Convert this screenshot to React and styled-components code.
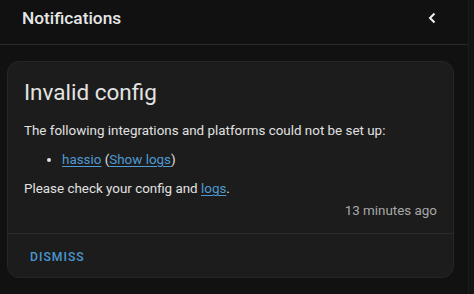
import React from "react";
import styled, { createGlobalStyle } from "styled-components";

const Global = createGlobalStyle`
  html, body { margin: 0; padding: 0; background: #131313; }
  body { font-family: Roboto, "Noto Sans", sans-serif; color: #e1e1e1; }
`;

const Page = styled.div`
  display: flex;
  width: 474px;
  height: 294px;
  overflow: hidden;
`;

const Drawer = styled.div`
  width: 468px;
  height: 294px;
  background: #111111;
  border-right: 1px solid #1b1b1b;
  display: flex;
  flex-direction: column;
`;

const Header = styled.div`
  height: 44px;
  border-bottom: 1px solid #2a2a2a;
  display: flex;
  align-items: center;
  justify-content: space-between;
  padding: 0 28px 0 22px;
  box-sizing: content-box;
`;

const HeaderTitle = styled.div`
  font-size: 17.3px;
  font-weight: 500;
  color: #e6e6e6;
  margin-top: -8px;
`;

const BackButton = styled.button`
  background: none;
  border: 0;
  padding: 0;
  width: 16px;
  height: 16px;
  display: flex;
  align-items: center;
  justify-content: center;
  color: #f0f0f0;
  margin-top: -8px;
`;

const Content = styled.div`
  padding: 16px 14px 0 7px;
`;

const Card = styled.div`
  background: #1c1c1c;
  border: 1px solid #262626;
  border-radius: 12px;
  height: 217px;
  box-sizing: border-box;
  display: flex;
  flex-direction: column;
`;

const CardBody = styled.div`
  padding: 14px 16px 0 16px;
  height: 172px;
  box-sizing: border-box;
  border-bottom: 1px solid #2a2a2a;
`;

const Title = styled.div`
  font-size: 22.5px;
  line-height: 32px;
  color: #e3e3e3;
  margin-bottom: 13px;
`;

const Text = styled.p`
  margin: 0;
  font-size: 13.4px;
  line-height: 20px;
  color: #e1e1e1;
`;

const List = styled.ul`
  margin: 9px 0 9px 0;
  padding-left: 38px;
  font-size: 13.4px;
  line-height: 20px;
`;

const Link = styled.a`
  color: #4f9ad3;
  text-decoration: underline;
  text-underline-offset: 2px;
`;

const Time = styled.div`
  text-align: right;
  font-size: 13.4px;
  line-height: 20px;
  color: #a8a8a8;
  margin-top: 2px;
`;

const Actions = styled.div`
  flex: 1;
  display: flex;
  align-items: center;
  padding-left: 22px;
  padding-top: 2px;
`;

const Dismiss = styled.button`
  background: none;
  border: 0;
  font-family: Roboto, sans-serif;
  font-size: 12.2px;
  font-weight: 500;
  letter-spacing: 1px;
  color: #4b97d1;
  padding: 0;
`;

export default function App() {
  return (
    <>
      <Global />
      <Page>
        <Drawer>
          <Header>
            <HeaderTitle>Notifications</HeaderTitle>
            <BackButton aria-label="Close">
              <svg width="10" height="12" viewBox="0 0 10 12">
                <path d="M7.5 1.5 L3 6 L7.5 10.5" fill="none" stroke="currentColor" strokeWidth="2" />
              </svg>
            </BackButton>
          </Header>
          <Content>
            <Card>
              <CardBody>
                <Title>Invalid config</Title>
                <Text>The following integrations and platforms could not be set up:</Text>
                <List>
                  <li>
                    <Link>hassio</Link> (<Link>Show logs</Link>)
                  </li>
                </List>
                <Text>
                  Please check your config and <Link>logs</Link>.
                </Text>
                <Time>13 minutes ago</Time>
              </CardBody>
              <Actions>
                <Dismiss>DISMISS</Dismiss>
              </Actions>
            </Card>
          </Content>
        </Drawer>
      </Page>
    </>
  );
}
